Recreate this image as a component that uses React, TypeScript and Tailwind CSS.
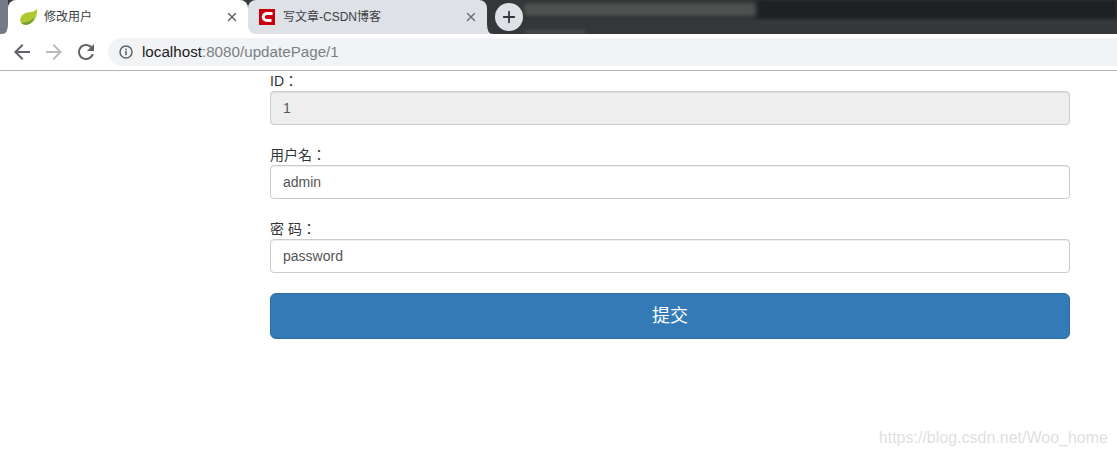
import { X, Plus } from "lucide-react";

const sans = "font-['Liberation_Sans','Noto_Sans_CJK_TC',sans-serif]";

function SpringLeaf() {
  return (
    <svg width="18" height="16" viewBox="0 0 18 16" className="shrink-0">
      <path d="M17 0C17.2 7 15 13 9 15.2C4.5 16.6 0.8 15.2 0.3 11.8C-0.1 7 3.5 4 8 3.4C12 2.9 15 2.5 17 0Z" fill="#aec82e" />
      <path d="M1.5 14C5.5 14 11 12.5 14.5 8C13 12.5 11 14.6 8 15.5C5 16.2 2.6 15.5 1.5 14Z" fill="#6a9a36" />
    </svg>
  );
}

function CsdnLogo() {
  return (
    <svg width="16" height="16" viewBox="0 0 16 16" className="shrink-0">
      <rect width="16" height="16" fill="#c90010" />
      <path d="M13.5 4.6H8C5.9 4.6 4.2 6 4.2 8s1.7 3.4 3.8 3.4h4.5" fill="none" stroke="#fff" strokeWidth="3" />
    </svg>
  );
}

function Flare({ color, flip }: { color: string; flip?: boolean }) {
  return (
    <svg
      width="6"
      height="10"
      viewBox="0 0 6 10"
      className={`absolute bottom-0 ${flip ? "right-full -scale-x-100" : "left-full"}`}
    >
      <path d="M0 0Q0 10 6 10H0Z" fill={color} />
    </svg>
  );
}

function ChromeIcon({ d, className }: { d: string; className: string }) {
  return (
    <svg width="24" height="24" viewBox="0 0 24 24" fill="currentColor" className={className}>
      <path d={d} />
    </svg>
  );
}

function Field({ label, value, disabled }: { label: string; value: string; disabled?: boolean }) {
  return (
    <div className="mb-[20px] flex flex-col">
      <label className="h-[20px] text-[14px] leading-[20px] text-[#333333]">{label}</label>
      <input
        readOnly
        value={value}
        className={`h-[34px] w-full rounded-[4px] border border-[#cccccc] px-[12px] text-[14px] text-[#555555] shadow-[inset_0_1px_1px_rgba(0,0,0,0.075)] outline-none ${
          disabled ? "bg-[#eeeeee]" : "bg-white"
        }`}
      />
    </div>
  );
}

export default function App() {
  return (
    <div className={`flex h-[455px] w-[1117px] flex-col overflow-hidden bg-white ${sans}`}>
      <div className="flex h-[34px] shrink-0 bg-[#36373a]">
        <div className="h-full w-[8px] bg-[#747a83]" />

        <div className="relative flex h-full w-[240px] items-center rounded-t-[8px] bg-white pl-[12px] pr-[9px] text-[12px] text-[#3c4043]">
          <Flare color="#ffffff" flip />
          <SpringLeaf />
          <span className="ml-[6px] flex-1 truncate">修改用户</span>
          <X size={14} strokeWidth={2.4} className="text-[#5f6368]" />
        </div>

        <div className="relative isolate h-full w-[239px]">
          <div className="absolute bottom-0 left-0 h-[8px] w-[8px] bg-white" />
          <Flare color="#dee1e6" />
          <div className="relative flex h-full items-center rounded-t-[8px] rounded-bl-[8px] bg-[#dee1e6] pl-[11px] pr-[9px] text-[12px] text-[#3c4043]">
            <CsdnLogo />
            <span className="ml-[8px] flex-1 truncate">写文章-CSDN博客</span>
            <X size={14} strokeWidth={2.4} className="text-[#6b6e73]" />
          </div>
        </div>

        <div className="ml-[8px] flex h-full items-center">
          <div className="flex h-[28px] w-[28px] items-center justify-center rounded-full bg-[#dee1e6] text-[#35363a]">
            <Plus size={18} strokeWidth={2.4} />
          </div>
        </div>

        <div className="flex flex-1 flex-col overflow-hidden">
          <div className="flex h-[19px] items-center bg-[#1e2023] blur-[1.5px]">
            <div className="h-[15px] w-[233px] bg-[#505250] blur-[2px]" />
          </div>
          <div className="flex-1 pl-[2px] pt-[11px]">
            <div className="h-[4px] w-[60px] bg-[#4a4b4d] blur-[1.5px]" />
          </div>
        </div>
      </div>

      <div className="flex h-[36px] shrink-0 items-center bg-white">
        <div className="flex w-[108px] items-center gap-[8px] pl-[10px] text-[#5f6368]">
          <ChromeIcon className="shrink-0" d="M20 11H7.83l5.59-5.59L12 4l-8 8 8 8 1.41-1.41L7.83 13H20v-2z" />
          <ChromeIcon className="shrink-0 text-[#b8babd]" d="M4 11h12.17l-5.59-5.59L12 4l8 8-8 8-1.41-1.41L16.17 13H4v-2z" />
          <ChromeIcon
            className="shrink-0"
            d="M17.65 6.35C16.2 4.9 14.21 4 12 4c-4.42 0-7.99 3.58-7.99 8s3.57 8 7.99 8c3.73 0 6.84-2.55 7.73-6h-2.08c-.82 2.33-3.04 4-5.65 4-3.31 0-6-2.69-6-6s2.69-6 6-6c1.66 0 3.14.69 4.22 1.78L13 11h7V4l-2.35 2.35z"
          />
        </div>
        <div className="flex h-[28px] flex-1 items-center rounded-l-[14px] bg-[#f1f3f4] pl-[11px] text-[15.2px]">
          <svg width="14" height="14" viewBox="0 0 14 14" className="shrink-0 text-[#5f6368]">
            <circle cx="7" cy="7" r="6" fill="none" stroke="currentColor" strokeWidth="1.5" />
            <rect x="6.2" y="6" width="1.6" height="4.2" fill="currentColor" />
            <rect x="6.2" y="3.6" width="1.6" height="1.6" fill="currentColor" />
          </svg>
          <span className="ml-[9px] text-[#202124]">localhost</span>
          <span className="text-[#7b7f84]">:8080/updatePage/1</span>
        </div>
      </div>

      <div className="h-px shrink-0 bg-[#b5b5b5]" />

      <div className="relative flex-1">
        <form className="ml-[270px] w-[800px]">
          <Field label="ID：" value="1" disabled />
          <Field label="用户名：" value="admin" />
          <Field label="密 码：" value="password" />
          <button
            type="button"
            className="h-[46px] w-full rounded-[6px] border border-[#2e6da4] bg-[#337ab7] text-[18px] text-white"
          >
            提交
          </button>
        </form>
        <span className="absolute right-[9px] bottom-[5px] text-[16px] text-[#dfdfdf]">
          https://blog.csdn.net/Woo_home
        </span>
      </div>
    </div>
  );
}
